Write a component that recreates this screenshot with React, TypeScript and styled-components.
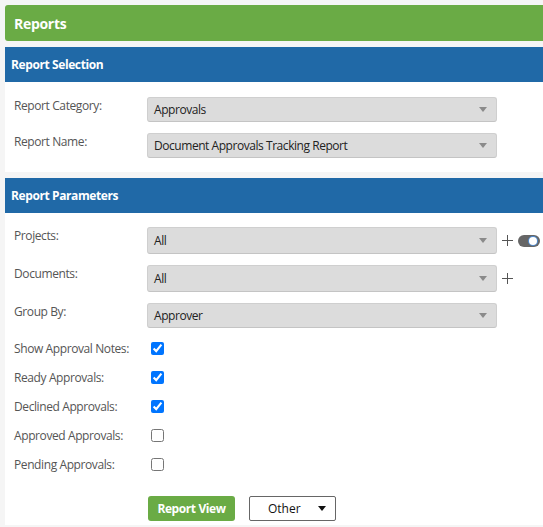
import React from "react";
import styled, { createGlobalStyle } from "styled-components";

const GlobalStyle = createGlobalStyle`
  html, body {
    margin: 0;
    padding: 0;
    background: #f5f5f5;
  }
  body {
    font-family: "Open Sans", "Noto Sans", Arial, sans-serif;
    font-size: 12px;
    color: #333;
  }
`;

const Page = styled.div`
  padding: 5px 0 0 5px;
  display: flex;
  flex-direction: column;
  overflow: hidden;
`;

const TitleBar = styled.div`
  height: 36px;
  background: #6aab45;
  border-radius: 3px 0 0 3px;
  color: #fff;
  font-weight: 700;
  font-size: 14px;
  display: flex;
  align-items: center;
  padding-left: 9px;
  margin-bottom: 6px;
  letter-spacing: -0.3px;
`;

const Section = styled.section<{ $gap?: number }>`
  display: flex;
  flex-direction: column;
  margin-bottom: ${(p) => p.$gap ?? 0}px;
`;

const SectionHeader = styled.div`
  height: 35px;
  background: #2069a7;
  color: #fff;
  font-weight: 700;
  font-size: 12px;
  display: flex;
  align-items: center;
  padding-left: 6px;
  letter-spacing: -0.4px;
`;

const SectionBody = styled.div<{ $pt: number; $pb: number; $gap: number }>`
  background: #fff;
  padding: ${(p) => p.$pt}px 0 ${(p) => p.$pb}px 9px;
  display: flex;
  flex-direction: column;
  gap: ${(p) => p.$gap}px;
`;

const Row = styled.div<{ $h: number }>`
  display: grid;
  grid-template-columns: 133px 350px auto;
  align-items: start;
  height: ${(p) => p.$h}px;
`;

const Label = styled.label<{ $pt?: number }>`
  color: #555;
  font-size: 12px;
  padding-top: ${(p) => p.$pt ?? 0}px;
  letter-spacing: -0.4px;
  white-space: nowrap;
  line-height: 17px;
`;

const Select = styled.div<{ $h: number }>`
  height: ${(p) => p.$h}px;
  box-sizing: border-box;
  background: #dcdcdc;
  border: 1px solid #cfcfcf;
  border-bottom-color: #c4c4c4;
  border-radius: 3px;
  display: flex;
  align-items: center;
  justify-content: space-between;
  padding: 0 9px 0 6px;
  color: #222;
  font-size: 12px;
  letter-spacing: -0.45px;
`;

const Caret = styled.span<{ $color?: string; $size?: number }>`
  width: 0;
  height: 0;
  border-left: ${(p) => p.$size ?? 4}px solid transparent;
  border-right: ${(p) => p.$size ?? 4}px solid transparent;
  border-top: ${(p) => (p.$size ?? 4) + 1}px solid ${(p) => p.$color ?? "#8a8a8a"};
`;

const Extras = styled.div`
  display: flex;
  align-items: center;
  gap: 4px;
  height: 100%;
  padding-left: 4px;
`;

const PlusIcon = styled.svg`
  width: 13px;
  height: 13px;
  display: block;
`;

const Toggle = styled.span`
  width: 22px;
  height: 12px;
  border-radius: 6px;
  background: #666;
  position: relative;
  display: inline-block;
  &::after {
    content: "";
    position: absolute;
    right: 3px;
    top: 2px;
    width: 8px;
    height: 8px;
    border-radius: 50%;
    background: #fff;
    box-shadow: 0 0 0 1px #4f8bd0;
  }
`;

const CheckList = styled.div`
  display: flex;
  flex-direction: column;
  gap: 13px;
  margin-top: 1px;
`;

const CheckRow = styled.div`
  display: grid;
  grid-template-columns: 133px auto;
  align-items: center;
  height: 16px;
`;

const Check = styled.input.attrs({ type: "checkbox", readOnly: true })`
  margin: 0 0 0 4px;
  width: 13px;
  height: 13px;
  accent-color: #0075ff;
`;

const Buttons = styled.div`
  display: flex;
  gap: 14px;
  padding-left: 134px;
  margin-top: 13px;
`;

const PrimaryButton = styled.button`
  height: 25px;
  width: 87px;
  border: none;
  border-radius: 3px;
  background: #6aab45;
  color: #fff;
  font-family: inherit;
  font-weight: 700;
  font-size: 12px;
  letter-spacing: -0.4px;
  padding: 0;
`;

const MenuButton = styled.button`
  height: 25px;
  width: 87px;
  box-sizing: border-box;
  border: 1px solid #666;
  border-radius: 2px;
  background: #fff;
  color: #111;
  font-family: inherit;
  font-size: 12px;
  display: flex;
  align-items: center;
  justify-content: space-between;
  padding: 0 9px 0 18px;
`;

const Plus = () => (
  <PlusIcon viewBox="0 0 13 13">
    <path d="M6.5 1v11M1 6.5h11" stroke="#555" strokeWidth="1" fill="none" />
  </PlusIcon>
);

const checks: [string, boolean][] = [
  ["Show Approval Notes:", true],
  ["Ready Approvals:", true],
  ["Declined Approvals:", true],
  ["Approved Approvals:", false],
  ["Pending Approvals:", false],
];

export default function App() {
  return (
    <>
      <GlobalStyle />
      <Page>
        <TitleBar>Reports</TitleBar>

        <Section $gap={6}>
          <SectionHeader>Report Selection</SectionHeader>
          <SectionBody $pt={15} $pb={14} $gap={11}>
            <Row $h={25}>
              <Label>Report Category:</Label>
              <Select $h={25}>
                Approvals
                <Caret />
              </Select>
            </Row>
            <Row $h={25}>
              <Label>Report Name:</Label>
              <Select $h={25}>
                Document Approvals Tracking Report
                <Caret />
              </Select>
            </Row>
          </SectionBody>
        </Section>

        <Section>
          <SectionHeader>Report Parameters</SectionHeader>
          <SectionBody $pt={14} $pb={4} $gap={11}>
            <Row $h={27}>
              <Label>Projects:</Label>
              <Select $h={27}>
                All
                <Caret />
              </Select>
              <Extras>
                <Plus />
                <Toggle />
              </Extras>
            </Row>
            <Row $h={27}>
              <Label>Documents:</Label>
              <Select $h={27}>
                All
                <Caret />
              </Select>
              <Extras>
                <Plus />
              </Extras>
            </Row>
            <Row $h={25}>
              <Label>Group By:</Label>
              <Select $h={25}>
                Approver
                <Caret />
              </Select>
            </Row>
            <CheckList>
              {checks.map(([label, on]) => (
                <CheckRow key={label}>
                  <Label>{label}</Label>
                  <Check defaultChecked={on} />
                </CheckRow>
              ))}
            </CheckList>
            <Buttons>
              <PrimaryButton>Report View</PrimaryButton>
              <MenuButton>
                Other
                <Caret $color="#111" $size={4} />
              </MenuButton>
            </Buttons>
          </SectionBody>
        </Section>
      </Page>
    </>
  );
}
